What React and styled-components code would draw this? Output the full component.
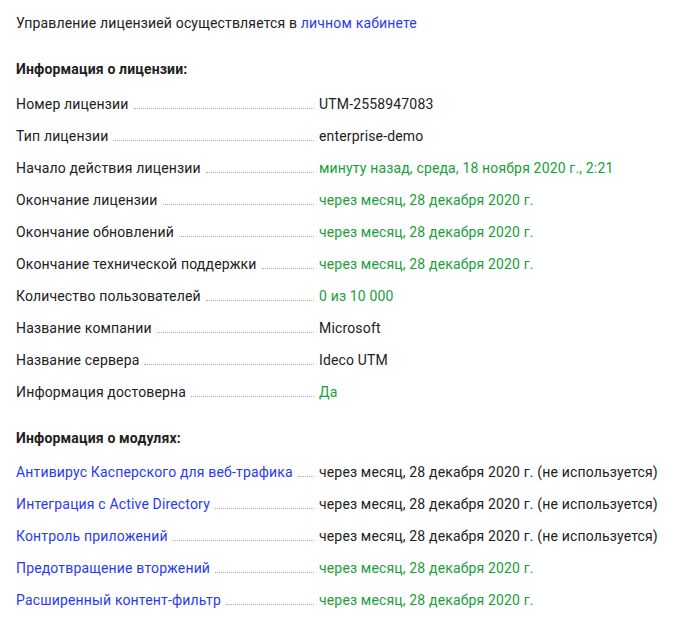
import React from 'react';
import styled, { createGlobalStyle } from 'styled-components';

const GlobalStyle = createGlobalStyle`
  body {
    margin: 0;
    background: #ffffff;
    font-family: Roboto, "Liberation Sans", sans-serif;
    font-size: 14px;
    letter-spacing: 0.16px;
    color: #212121;
  }
`;

const license = [
  { label: 'Номер лицензии', value: 'UTM-2558947083' },
  { label: 'Тип лицензии', value: 'enterprise-demo' },
  { label: 'Начало действия лицензии', value: 'минуту назад, среда, 18 ноября 2020 г., 2:21', ok: true },
  { label: 'Окончание лицензии', value: 'через месяц, 28 декабря 2020 г.', ok: true },
  { label: 'Окончание обновлений', value: 'через месяц, 28 декабря 2020 г.', ok: true },
  { label: 'Окончание технической поддержки', value: 'через месяц, 28 декабря 2020 г.', ok: true },
  { label: 'Количество пользователей', value: '0 из 10 000', ok: true },
  { label: 'Название компании', value: 'Microsoft' },
  { label: 'Название сервера', value: 'Ideco UTM' },
  { label: 'Информация достоверна', value: 'Да', ok: true },
];

const modules = [
  { label: 'Антивирус Касперского для веб-трафика', value: 'через месяц, 28 декабря 2020 г. (не используется)' },
  { label: 'Интеграция с Active Directory', value: 'через месяц, 28 декабря 2020 г. (не используется)' },
  { label: 'Контроль приложений', value: 'через месяц, 28 декабря 2020 г. (не используется)' },
  { label: 'Предотвращение вторжений', value: 'через месяц, 28 декабря 2020 г.', ok: true },
  { label: 'Расширенный контент-фильтр', value: 'через месяц, 28 декабря 2020 г.', ok: true },
];

const Page = styled.div`
  padding: 13px 16px 16px;
`;

const Intro = styled.p`
  margin: 0;
  line-height: 20px;
`;

const Link = styled.a`
  color: #2a3af2;
  text-decoration: none;
  cursor: pointer;
`;

const Heading = styled.h3`
  margin: ${({ $top }) => $top}px 0 ${({ $bottom }) => $bottom}px;
  font-size: 14px;
  font-weight: 700;
  line-height: 20px;
  color: #212121;
`;

const List = styled.div`
  display: flex;
  flex-direction: column;
`;

const Row = styled.div`
  display: flex;
  align-items: baseline;
  height: 32px;
  line-height: 32px;
`;

const Label = styled.div`
  display: flex;
  align-items: baseline;
  flex: 0 0 300px;
  white-space: nowrap;
  color: ${({ $link }) => ($link ? '#2a3af2' : '#212121')};
`;

const Leader = styled.span`
  flex: 1;
  margin: 0 2px 0 5px;
  border-bottom: 1px dotted #a8a8a8;
`;

const Value = styled.div`
  padding-left: 3px;
  white-space: nowrap;
  color: ${({ $ok }) => ($ok ? '#17a03b' : '#212121')};
`;

const InfoList = ({ items, links }) => (
  <List>
    {items.map((item) => (
      <Row key={item.label}>
        <Label $link={links}>
          {item.label}
          <Leader />
        </Label>
        <Value $ok={item.ok}>{item.value}</Value>
      </Row>
    ))}
  </List>
);

export default function App() {
  return (
    <>
      <GlobalStyle />
      <Page>
        <Intro>
          Управление лицензией осуществляется в <Link>личном кабинете</Link>
        </Intro>
        <Heading $top={26} $bottom={9}>Информация о лицензии:</Heading>
        <InfoList items={license} />
        <Heading $top={20} $bottom={8}>Информация о модулях:</Heading>
        <InfoList items={modules} links />
      </Page>
    </>
  );
}
